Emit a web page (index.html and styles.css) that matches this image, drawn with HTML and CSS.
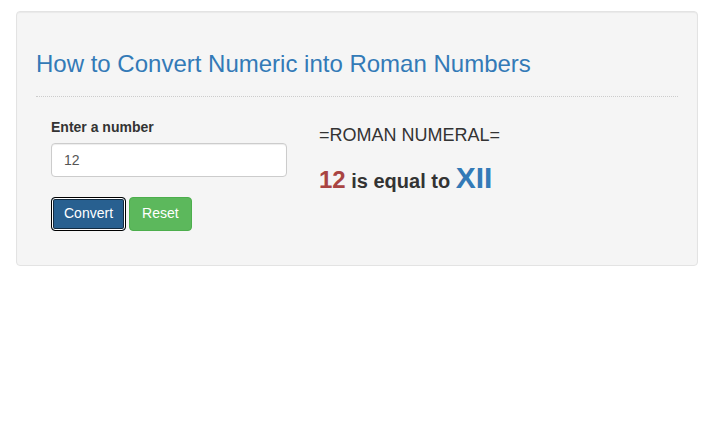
FILE: index.html
```html
<!DOCTYPE html>
<html lang="en">
<head>
  <meta charset="UTF-8" />
  <title>Numeric to Roman Numbers</title>
  <link rel="stylesheet" href="styles.css">
</head>
<body>

<div class="well">
  <div class="page-head">
    <h3>How to Convert Numeric into Roman Numbers</h3>
  </div>

  <div class="converter">
    <form class="number-form" onsubmit="return false;">
      <label for="numberInput">Enter a number</label>
      <input type="text" id="numberInput" value="12">
      <div class="button-bar">
        <button type="submit" class="btn btn-primary">Convert</button>
        <button type="reset" class="btn btn-success">Reset</button>
      </div>
    </form>

    <div class="result-box">
      <p class="result-title">=ROMAN NUMERAL=</p>
      <div class="result">
        <span class="num">12</span> is equal to <span class="roman">XII</span>
      </div>
    </div>
  </div>
</div>

</body>
</html>
```

FILE: styles.css
```css
body {
  font-family: "Liberation Sans", Arial, sans-serif;
  font-size: 14px;
  line-height: 1.42857;
  color: #333;
  background-color: #fff;
  margin: 0;
  padding: 11px 19px 0 16px;
}

.well {
  background-color: #f5f5f5;
  border: 1px solid #e3e3e3;
  border-radius: 4px;
  padding: 19px;
  box-shadow: inset 0 1px 1px rgba(0, 0, 0, 0.05);
}

.page-head {
  border-bottom: 1px dotted #ccc;
  padding-bottom: 9px;
}

.page-head h3 {
  font-size: 24px;
  font-weight: normal;
  line-height: 1.1;
  color: #337ab7;
  margin: 20px 0 10px;
}

.converter {
  display: grid;
  grid-template-columns: 236px 1fr;
  gap: 32px;
  padding-left: 15px;
}

.number-form {
  padding-top: 21px;
  margin: 0;
}

.number-form label {
  display: block;
  font-weight: bold;
  margin-bottom: 5px;
}

.number-form input {
  display: block;
  box-sizing: border-box;
  width: 100%;
  height: 34px;
  padding: 6px 12px;
  font-family: inherit;
  font-size: 14px;
  color: #555;
  background-color: #fff;
  border: 1px solid #ccc;
  border-radius: 4px;
  box-shadow: inset 0 1px 1px rgba(0, 0, 0, 0.075);
  margin-bottom: 20px;
}

.button-bar {
  display: flex;
  gap: 3px;
  margin-bottom: 15px;
}

.btn {
  font-family: inherit;
  font-size: 14px;
  line-height: 1.42857;
  height: 34px;
  padding: 6px 12px;
  color: #fff;
  border: 1px solid transparent;
  border-radius: 4px;
  cursor: pointer;
}

.btn-primary {
  background-color: #286090;
  border-color: #000;
  box-shadow: inset 0 0 0 1px #fff, inset 0 0 0 2px #122b40;
}

.btn-success {
  background-color: #5cb85c;
  border-color: #4cae4c;
}

.result-box {
  padding-top: 26px;
}

.result-title {
  font-size: 18px;
  margin: 0;
}

.result {
  margin-top: 11px;
  font-size: 20px;
  font-weight: bold;
  line-height: 1.2;
}

.result .num {
  font-size: 24px;
  color: #a94442;
}

.result .roman {
  font-size: 30px;
  color: #337ab7;
}
```
